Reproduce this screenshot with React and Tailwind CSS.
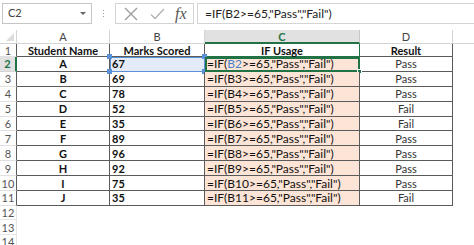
const cols = [
  { key: "A", w: "w-[93px]" },
  { key: "B", w: "w-[95px]" },
  { key: "C", w: "w-[155px]" },
  { key: "D", w: "w-[93px]" },
]

const students = [
  ["A", "67"],
  ["B", "69"],
  ["C", "78"],
  ["D", "52"],
  ["E", "35"],
  ["F", "89"],
  ["G", "96"],
  ["H", "92"],
  ["I", "75"],
  ["J", "35"],
]

function FormulaBar() {
  return (
    <div className="flex h-[28px] items-start pt-[3px]">
      <div className="ml-[2px] flex h-[21px] w-[90px] items-center justify-between border border-[#c6c6c6] pl-[5px] pr-[5px] text-[11px] text-[#444]">
        <span>C2</span>
        <span className="h-0 w-0 border-x-[3px] border-t-[3px] border-x-transparent border-t-[#666]"></span>
      </div>
      <div className="flex h-[21px] w-[23px] flex-col items-center justify-center gap-[2px]">
        <span className="h-[1px] w-[1px] bg-[#999]"></span>
        <span className="h-[1px] w-[1px] bg-[#999]"></span>
        <span className="h-[1px] w-[1px] bg-[#999]"></span>
      </div>
      <div className="flex h-[21px] w-[79px] items-center border border-[#d4d4d4] pl-[8px]">
        <svg width="14" height="14" viewBox="0 0 14 14" className="mr-[12px]">
          <path d="M1 1 L13 13 M13 1 L1 13" stroke="#9a9a9a" strokeWidth="1.3" fill="none" />
        </svg>
        <svg width="15" height="12" viewBox="0 0 15 12" className="mr-[10px]">
          <path d="M1 6.5 L5 10.5 L14 1" stroke="#b0b0b0" strokeWidth="1.3" fill="none" />
        </svg>
        <span className="font-['Liberation_Serif',serif] text-[16px] italic leading-none text-[#555]">fx</span>
      </div>
      <div className="ml-[3px] flex h-[21px] flex-1 items-center border border-r-0 border-[#d4d4d4] pl-[7px] text-[12px] text-[#222]">
        =IF(B2&gt;=65,"Pass","Fail")
      </div>
    </div>
  )
}

function HeaderRow() {
  return (
    <div className="mt-[2px] flex h-[14px] text-[11px] leading-[13px]">
      <div className="relative w-[17px] border-r border-b border-[#d4d4d4] bg-white">
        <span className="absolute right-[2px] bottom-[2px] h-0 w-0 [border-bottom:8px_solid_#dcdcdc] [border-left:8px_solid_transparent]"></span>
      </div>
      {cols.map((c) =>
        c.key === "C" ? (
          <div key={c.key} className={`${c.w} flex items-center justify-center border-r border-b-2 border-r-[#c6c6c6] border-b-[#217346] bg-[#e1e1e1] font-bold text-[#217346]`}>
            {c.key}
          </div>
        ) : (
          <div key={c.key} className={`${c.w} flex items-center justify-center border-r border-b border-[#d4d4d4] text-[#444]`}>
            {c.key}
          </div>
        )
      )}
      <div className="flex-1 border-b border-[#d4d4d4]"></div>
    </div>
  )
}

function Formula({ row }) {
  return (
    <span className="text-[12px]">
      =IF(<span className={row === 2 ? "text-[#4a7fc9]" : ""}>B{row}</span>&gt;=65,"Pass","Fail")
    </span>
  )
}

function DataRow({ row, name, mark }) {
  const active = row === 2
  const result = Number(mark) >= 65 ? "Pass" : "Fail"
  return (
    <div className="flex h-[14.9px] text-[11px] leading-[13px] text-[#111]">
      <div className={`flex w-[17px] items-center justify-center border-b border-r ${active ? "border-b-[#d4d4d4] border-r-[#217346] border-r-2 bg-[#e1e1e1] font-bold text-[#217346]" : "border-b-[#e1e1e1] border-r-[#5b5b5b] text-[#555]"}`}>
        {row}
      </div>
      <div className="flex w-[93px] items-center justify-center border-r border-b border-[#5b5b5b] font-bold">{name}</div>
      <div className={`relative flex w-[95px] items-center border-r border-b pl-[2px] font-bold ${active ? "border-[#5b8fd6] bg-[#e3ebf8] outline outline-[#5b8fd6] -outline-offset-1" : "border-[#5b5b5b]"}`}>
        {mark}
        {active && (
          <>
            <span className="absolute -top-[3px] -left-[3px] h-[5px] w-[5px] bg-[#5b8fd6]"></span>
            <span className="absolute -top-[3px] -right-[3px] h-[5px] w-[5px] bg-[#5b8fd6]"></span>
            <span className="absolute -bottom-[3px] -left-[3px] h-[5px] w-[5px] bg-[#5b8fd6]"></span>
            <span className="absolute -right-[3px] -bottom-[3px] h-[5px] w-[5px] bg-[#5b8fd6]"></span>
          </>
        )}
      </div>
      <div className={`relative flex w-[155px] items-center border-r border-b pl-[2px] ${active ? "border-[#217346] bg-[#fce4d6] outline-2 outline-[#217346] -outline-offset-2" : "border-[#5b5b5b] bg-[#fce4d6]"}`}>
        <Formula row={row} />
        {active && <span className="absolute -right-[3px] -bottom-[3px] h-[5px] w-[5px] border border-white bg-[#217346]"></span>}
      </div>
      <div className="flex w-[93px] items-center justify-center border-r border-b border-[#5b5b5b] text-[#333]">{result}</div>
      <div className="flex-1"></div>
    </div>
  )
}

function TitleRow() {
  return (
    <div className="flex h-[13px] text-[11px] leading-[13px] text-[#111]">
      <div className="flex w-[17px] items-center justify-center border-r border-b border-r-[#5b5b5b] border-b-[#e1e1e1] text-[#555]">1</div>
      <div className="flex w-[93px] items-center justify-center border-r border-b border-[#5b5b5b] font-bold">Student Name</div>
      <div className="flex w-[95px] items-center justify-center border-r border-b border-[#5b5b5b] font-bold">Marks Scored</div>
      <div className="flex w-[155px] items-center justify-center border-r border-b border-[#217346] font-bold">IF Usage</div>
      <div className="flex w-[93px] items-center justify-center border-r border-b border-[#5b5b5b] font-bold">Result</div>
      <div className="flex-1"></div>
    </div>
  )
}

function EmptyRow({ row }) {
  return (
    <div className="flex h-[14.5px] text-[11px] leading-[13px]">
      <div className="flex w-[17px] items-center justify-center border-r border-b border-[#e6e6e6] text-[#555]">{row}</div>
      <div className="flex-1"></div>
    </div>
  )
}

export default function App() {
  return (
    <div className="h-[245px] w-[474px] overflow-hidden bg-white font-['Lato',sans-serif]">
      <FormulaBar />
      <HeaderRow />
      <TitleRow />
      {students.map(([name, mark], i) => (
        <DataRow key={name} row={i + 2} name={name} mark={mark} />
      ))}
      {[12, 13, 14].map((r) => (
        <EmptyRow key={r} row={r} />
      ))}
    </div>
  )
}
